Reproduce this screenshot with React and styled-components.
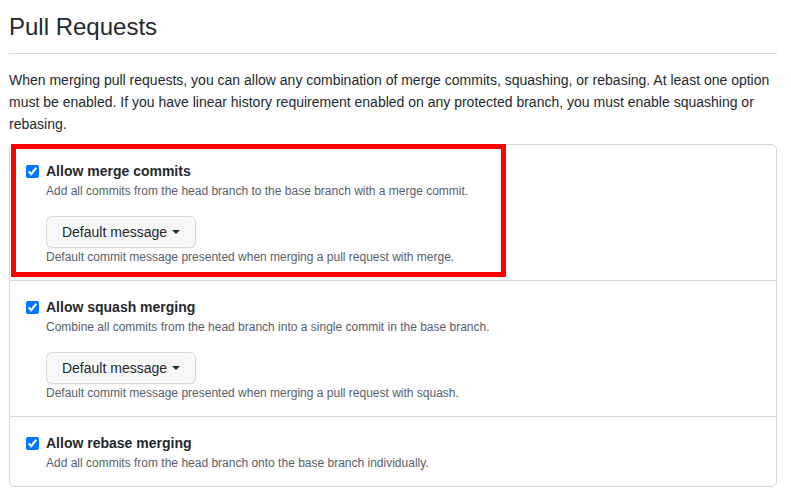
import React from 'react'
import styled, { createGlobalStyle } from 'styled-components'

const GlobalStyle = createGlobalStyle`
  html, body {
    margin: 0;
    padding: 0;
    background: #ffffff;
  }
  body {
    font-family: "Liberation Sans", Arial, sans-serif;
    color: #24292f;
  }
`

const Page = styled.div`
  width: 774px;
  padding: 0 0 0 9px;
`

const Header = styled.div`
  margin-right: 6px;
  padding: 9px 0 8px;
  border-bottom: 1px solid #d0d7de;
`

const Title = styled.h2`
  margin: 0;
  font-size: 24px;
  font-weight: 400;
  line-height: 36px;
  color: #24292f;
`

const Intro = styled.p`
  margin: 15px 0 9px;
  font-size: 14px;
  line-height: 22px;
  color: #24292f;
`

const Box = styled.div`
  margin-right: 6px;
  border: 1px solid #d0d7de;
  border-radius: 6px;
`

const Row = styled.div`
  position: relative;
  padding: 16px 16px 14px;
  border-top: ${({ $first }) => ($first ? 'none' : '1px solid #d0d7de')};
`

const Highlight = styled.div`
  position: absolute;
  top: -1px;
  left: 1px;
  width: 495px;
  height: 133px;
  box-sizing: border-box;
  border: 5px solid #ff0000;
  pointer-events: none;
`

const Label = styled.label`
  display: flex;
  align-items: center;
  font-size: 14px;
  font-weight: 700;
  line-height: 21px;
  color: #24292f;
`

const Check = styled.input`
  width: 13px;
  height: 13px;
  margin: 0 7px 0 0;
  accent-color: #0075ff;
`

const Body = styled.div`
  padding-left: 20px;
`

const Note = styled.div`
  font-size: 12px;
  line-height: 18px;
  color: #57606a;
`

const MenuButton = styled.button`
  display: flex;
  align-items: center;
  justify-content: center;
  gap: 5px;
  height: 32px;
  width: 150px;
  margin-top: 16px;
  padding: 0 8px;
  box-sizing: border-box;
  white-space: nowrap;
  font-family: "Liberation Sans", Arial, sans-serif;
  font-size: 14px;
  color: #24292f;
  background: #f6f8fa;
  border: 1px solid rgba(31, 35, 40, 0.15);
  border-radius: 6px;
  box-shadow: 0 1px 0 rgba(31, 35, 40, 0.04);
`

const Caret = styled.span`
  width: 0;
  height: 0;
  border-left: 4px solid transparent;
  border-right: 4px solid transparent;
  border-top: 4px solid #24292f;
`

const options = [
  {
    title: 'Allow merge commits',
    desc: 'Add all commits from the head branch to the base branch with a merge commit.',
    note: 'Default commit message presented when merging a pull request with merge.',
    highlight: true,
  },
  {
    title: 'Allow squash merging',
    desc: 'Combine all commits from the head branch into a single commit in the base branch.',
    note: 'Default commit message presented when merging a pull request with squash.',
  },
  {
    title: 'Allow rebase merging',
    desc: 'Add all commits from the head branch onto the base branch individually.',
  },
]

const App = () => (
  <>
    <GlobalStyle />
    <Page>
      <Header>
        <Title>Pull Requests</Title>
      </Header>
      <Intro>
        When merging pull requests, you can allow any combination of merge commits, squashing, or rebasing. At least one option must be enabled. If you have linear history requirement enabled on any protected branch, you must enable squashing or rebasing.
      </Intro>
      <Box>
        {options.map((opt, idx) => (
          <Row key={idx} $first={idx === 0}>
            <Label>
              <Check type="checkbox" defaultChecked />
              {opt.title}
            </Label>
            <Body>
              <Note>{opt.desc}</Note>
              {opt.note && (
                <>
                  <MenuButton type="button">
                    <span>Default message</span>
                    <Caret />
                  </MenuButton>
                  <Note>{opt.note}</Note>
                </>
              )}
            </Body>
            {opt.highlight && <Highlight />}
          </Row>
        ))}
      </Box>
    </Page>
  </>
)

export default App
